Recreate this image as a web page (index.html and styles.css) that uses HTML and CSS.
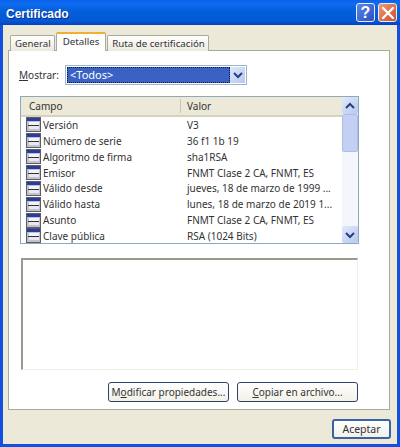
FILE: index.html
```html
<!DOCTYPE html>
<html lang="es">
<head>
    <meta charset="UTF-8">
    <title>Certificado</title>
    <link rel="stylesheet" href="styles.css">
</head>
<body>
    <svg class="defs" width="0" height="0">
        <symbol id="field" viewBox="0 0 15 15">
            <rect x="0.5" y="0.5" width="14" height="14" fill="#c2c2cc" stroke="#5c5c68"/>
            <rect x="1" y="1" width="13" height="3" fill="#2c3c9c"/>
            <rect x="3" y="5" width="10" height="3" fill="#f4f4f8"/>
            <rect x="2" y="8" width="11" height="1" fill="#30303a"/>
            <rect x="3" y="9" width="10" height="3" fill="#e8e8f0"/>
        </symbol>
    </svg>
    <div class="window">
        <div class="titlebar">
            <span class="title">Certificado</span>
            <span class="caption-btn help">?</span>
            <span class="caption-btn close">
                <svg width="14" height="14" viewBox="0 0 14 14"><path d="M2 2 L12 12 M12 2 L2 12" stroke="#fff" stroke-width="2.4" stroke-linecap="round"/></svg>
            </span>
        </div>
        <div class="body">
            <div class="tabs">
                <div class="tab">General</div>
                <div class="tab active">Detalles</div>
                <div class="tab">Ruta de certificación</div>
            </div>
            <div class="panel">
                <div class="show-row">
                    <label class="show-label"><u>M</u>ostrar:</label>
                    <div class="combo">
                        <div class="combo-value"><span>&lt;Todos&gt;</span></div>
                        <div class="combo-btn">
                            <svg width="10" height="8" viewBox="0 0 10 8"><path d="M1 2 L5 6 L9 2" fill="none" stroke="#2b3f80" stroke-width="2"/></svg>
                        </div>
                    </div>
                </div>
                <div class="list">
                    <div class="list-main">
                        <div class="list-head">
                            <div class="col-field">Campo</div>
                            <div class="col-value">Valor</div>
                        </div>
                        <div class="row"><div class="col-field"><svg class="ico"><use href="#field"/></svg>Versión</div><div class="col-value">V3</div></div>
                        <div class="row"><div class="col-field"><svg class="ico"><use href="#field"/></svg>Número de serie</div><div class="col-value">36 f1 1b 19</div></div>
                        <div class="row"><div class="col-field"><svg class="ico"><use href="#field"/></svg>Algoritmo de firma</div><div class="col-value">sha1RSA</div></div>
                        <div class="row"><div class="col-field"><svg class="ico"><use href="#field"/></svg>Emisor</div><div class="col-value">FNMT Clase 2 CA, FNMT, ES</div></div>
                        <div class="row"><div class="col-field"><svg class="ico"><use href="#field"/></svg>Válido desde</div><div class="col-value">jueves, 18 de marzo de 1999 ...</div></div>
                        <div class="row"><div class="col-field"><svg class="ico"><use href="#field"/></svg>Válido hasta</div><div class="col-value">lunes, 18 de marzo de 2019 1...</div></div>
                        <div class="row"><div class="col-field"><svg class="ico"><use href="#field"/></svg>Asunto</div><div class="col-value">FNMT Clase 2 CA, FNMT, ES</div></div>
                        <div class="row"><div class="col-field"><svg class="ico"><use href="#field"/></svg>Clave pública</div><div class="col-value">RSA (1024 Bits)</div></div>
                    </div>
                    <div class="scrollbar">
                        <div class="scroll-btn">
                            <svg width="10" height="8" viewBox="0 0 10 8"><path d="M1 6 L5 2 L9 6" fill="none" stroke="#2b3f80" stroke-width="2"/></svg>
                        </div>
                        <div class="scroll-thumb"></div>
                        <div class="scroll-track"></div>
                        <div class="scroll-btn">
                            <svg width="10" height="8" viewBox="0 0 10 8"><path d="M1 2 L5 6 L9 2" fill="none" stroke="#2b3f80" stroke-width="2"/></svg>
                        </div>
                    </div>
                </div>
                <div class="detail"></div>
                <div class="panel-buttons">
                    <button class="btn wide">M<u>o</u>dificar propiedades...</button>
                    <button class="btn wide"><u>C</u>opiar en archivo...</button>
                </div>
            </div>
            <div class="footer">
                <button class="btn ok">Aceptar</button>
            </div>
        </div>
    </div>
</body>
</html>
```

FILE: styles.css
```css
body {
    margin: 0;
    font-family: "Noto Sans", sans-serif;
    font-size: 10px;
    color: #333;
}

.defs {
    position: absolute;
}

.window {
    width: 400px;
    height: 447px;
    display: flex;
    flex-direction: column;
    background-color: #1450e0;
}

.titlebar {
    height: 25px;
    flex: none;
    display: flex;
    align-items: center;
    padding: 0 3px 0 6px;
    gap: 3px;
    background: linear-gradient(#0c62ea 0, #0f6cf2 4px, #0460dc 10px, #0458d4 21px, #0440c4 100%);
}

.title {
    flex: 1;
    color: #fff;
    font-family: "Liberation Sans", sans-serif;
    font-size: 12px;
    font-weight: bold;
    padding-top: 2px;
    text-shadow: 1px 1px 0 #0a2c90;
}

.caption-btn {
    width: 19px;
    height: 19px;
    box-sizing: border-box;
    border: 1px solid #e8eef8;
    border-radius: 3px;
    display: flex;
    align-items: center;
    justify-content: center;
    color: #fff;
    font-family: "Liberation Sans", sans-serif;
    font-size: 16px;
    font-weight: bold;
}

.help {
    background: linear-gradient(135deg, #5c86e8, #2a50c4);
}

.close {
    background: linear-gradient(135deg, #ec9a78, #d04c24);
}

.body {
    flex: 1;
    margin: 0 3px 3px 3px;
    padding: 7px 6px 0 5px;
    background-color: #ece9d8;
    display: flex;
    flex-direction: column;
}

.tabs {
    display: flex;
    align-items: flex-end;
    height: 19px;
    padding-left: 2px;
    margin-bottom: -1px;
    font-size: 9.7px;
    position: relative;
    z-index: 1;
}

.tab {
    height: 16px;
    line-height: 15px;
    padding: 0 3px 0 4px;
    box-sizing: border-box;
    border: 1px solid #a8ab9c;
    border-bottom: none;
    border-radius: 2px 2px 0 0;
    background: linear-gradient(#fff, #ece9e0);
}

.tab.active {
    height: 19px;
    line-height: 16px;
    padding: 0 6px;
    margin: 0 1px;
    background: #fff;
    border-top: 2px solid #f0b030;
}

.panel {
    height: 360px;
    box-sizing: border-box;
    margin-right: 1px;
    border: 1px solid #a8ab9c;
    padding: 14px 32px 0 12px;
    background-color: #fff;
}

.show-row {
    display: flex;
    align-items: center;
    height: 20px;
    gap: 9px;
    margin-left: -2px;
}

.show-label {
    width: 37px;
    white-space: nowrap;
}

.combo {
    width: 182px;
    height: 20px;
    box-sizing: border-box;
    display: flex;
    padding: 1px;
    border: 1px solid #9db4c8;
    background-color: #fff;
}

.combo-value {
    flex: 1;
    border: 1px dotted #10183c;
    background-color: #3a62c4;
    color: #fff;
    font-size: 11px;
    line-height: 14px;
}

.combo-value span {
    padding-left: 2px;
}

.combo-btn {
    width: 15px;
    display: flex;
    align-items: center;
    justify-content: center;
    background: linear-gradient(135deg, #dfe8fa, #b6c6f0);
}

.list {
    width: 339px;
    height: 148px;
    box-sizing: border-box;
    margin-top: 11px;
    margin-left: -1px;
    border: 1px solid #8fa8b8;
    display: flex;
    background-color: #fff;
}

.list-main {
    flex: 1;
    min-width: 0;
    overflow: hidden;
}

.list-head {
    display: flex;
    height: 20px;
    align-items: center;
    box-sizing: border-box;
    background-color: #ece9d8;
    border-bottom: 2px solid #d6d2c0;
}

.list-head .col-field {
    padding-left: 8px;
    border-right: 1px solid #c8c5b2;
}

.col-field {
    width: 160px;
    flex: none;
    box-sizing: border-box;
    display: flex;
    align-items: center;
    gap: 2px;
}

.col-value {
    padding-left: 6px;
    white-space: nowrap;
}

.row {
    display: flex;
    align-items: center;
    height: 15.86px;
}

.row .col-field {
    padding-left: 5px;
}

.ico {
    width: 15px;
    height: 15px;
    flex: none;
}

.scrollbar {
    width: 16px;
    flex: none;
    display: flex;
    flex-direction: column;
    background-color: #f4f6fb;
}

.scroll-btn {
    height: 17px;
    flex: none;
    display: flex;
    align-items: center;
    justify-content: center;
    background: linear-gradient(135deg, #e2eafa, #b6c8f0);
    border-radius: 2px;
}

.scroll-thumb {
    height: 38px;
    flex: none;
    background-color: #c4cff4;
    border: 1px solid #aebde8;
    box-sizing: border-box;
    border-radius: 2px;
}

.scroll-track {
    flex: 1;
}

.detail {
    width: 337px;
    height: 112px;
    box-sizing: border-box;
    margin-top: 14px;
    border-top: 2px solid #99998e;
    border-left: 2px solid #99998e;
    border-right: 1px solid #f0f0ea;
    border-bottom: 1px solid #f0f0ea;
}

.panel-buttons {
    display: flex;
    justify-content: flex-end;
    width: 337px;
    gap: 8px;
    margin-top: 12px;
}

.btn {
    height: 20px;
    padding: 0;
    box-sizing: border-box;
    border: 1px solid #2a4468;
    border-radius: 3px;
    background: linear-gradient(#fff, #f2f0e8);
    font: inherit;
    color: inherit;
    white-space: nowrap;
}

.wide {
    width: 121px;
}

.footer {
    display: flex;
    justify-content: flex-end;
    margin-top: 9px;
}

.ok {
    width: 59px;
    font-size: 10.5px;
    border: 2px solid #3a62a8;
}
```
